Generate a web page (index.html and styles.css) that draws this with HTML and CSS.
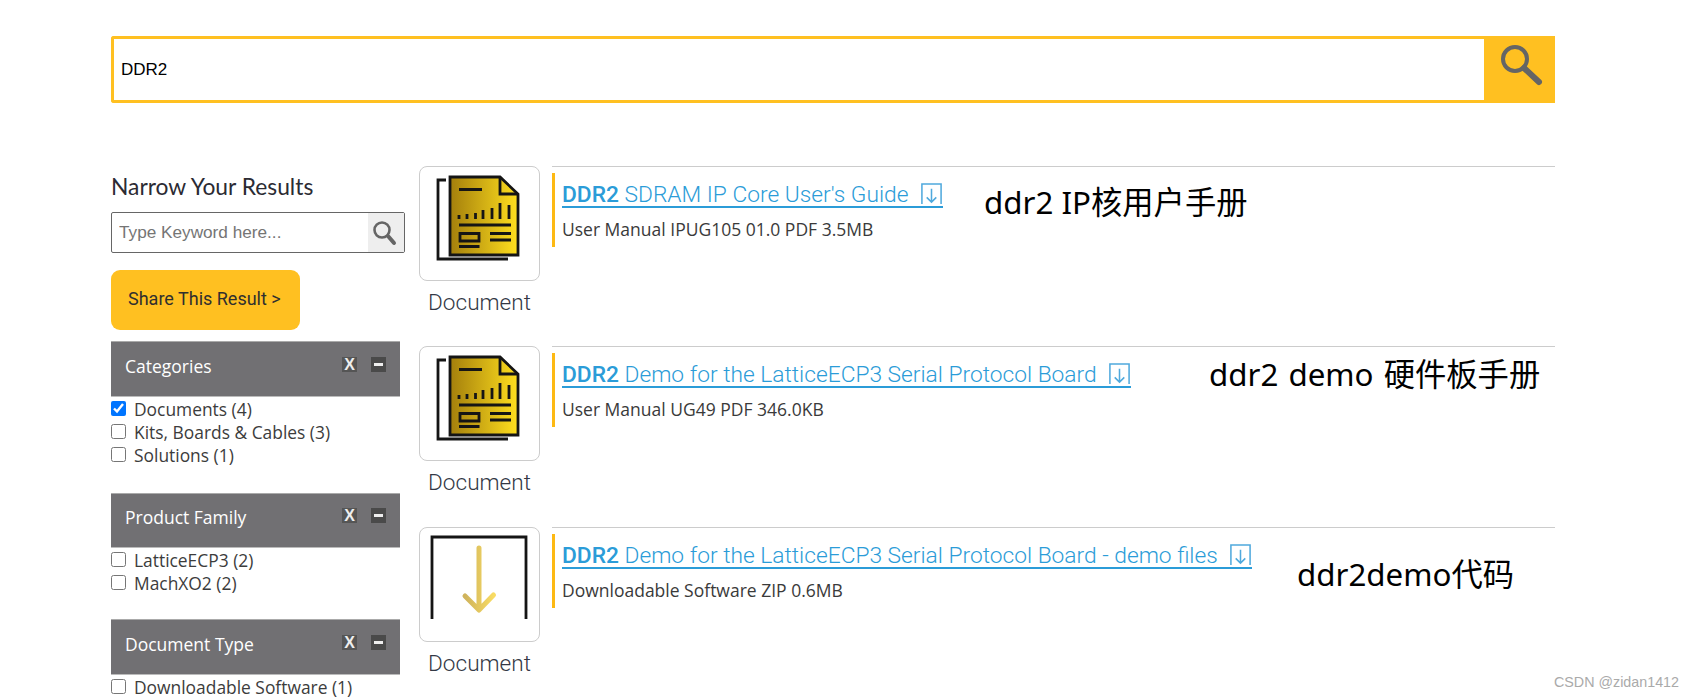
FILE: index.html
```html
<!DOCTYPE html>
<html lang="en">
<head>
<meta charset="utf-8">
<title>DDR2 search results</title>
<link rel="stylesheet" href="styles.css">
</head>
<body>
<svg class="defs" width="0" height="0" aria-hidden="true">
  <defs>
    <linearGradient id="gold" x1="0" x2="1" y1="0" y2="0">
      <stop offset="0" stop-color="#a47f0c"/>
      <stop offset="1" stop-color="#ffdf1e"/>
    </linearGradient>
    <linearGradient id="soft" gradientUnits="userSpaceOnUse" x1="46" x2="75" y1="0" y2="0">
      <stop offset="0" stop-color="#cfb35c"/>
      <stop offset="1" stop-color="#f9dc63"/>
    </linearGradient>
    <g id="doc-icon">
      <path class="ink" d="M27 14 H19 V93 H89"/>
      <path class="page-shape" d="M31 11 H81 L99 28 V89 H31 Z"/>
      <path class="ink" d="M81 11 V28 H99"/>
      <path class="ink" d="M40 23.5 H63 M40 59 H92 M40 80.5 H60.5 M71 67.5 H92 M71 74 H92 M41 67.5 H60 V75 H41 Z"/>
      <path class="ink" d="M40 49 V53 M48 48 V53 M56.5 47 V53 M64 44 V53 M73 42 V53 M81 37 V53 M90 39 V53"/>
    </g>
  </defs>
</svg>
<div class="page">
  <form class="search">
    <input class="search-input" type="text" value="DDR2">
    <span class="search-btn">
      <svg width="65" height="67" viewBox="0 0 65 67"><circle cx="28" cy="23" r="12" class="glass"/><path d="M37 32 L52 46" class="glass handle"/></svg>
    </span>
  </form>

  <div class="main">
    <aside class="side">
      <h2 class="side-title">Narrow Your Results</h2>
      <div class="keyword">
        <input class="keyword-input" type="text" placeholder="Type Keyword here...">
        <span class="keyword-btn">
          <svg width="36" height="39" viewBox="0 0 36 39"><circle cx="14" cy="17" r="7.5" class="glass thin"/><path d="M20 23 L26 30" class="handle-s"/></svg>
        </span>
      </div>
      <a class="share">Share This Result &gt;</a>

      <section class="facet">
        <header class="facet-head"><span>Categories</span><span class="facet-tools"><b>X</b><b class="minus"></b></span></header>
        <label class="check"><input type="checkbox" checked>Documents (4)</label>
        <label class="check"><input type="checkbox">Kits, Boards &amp; Cables (3)</label>
        <label class="check"><input type="checkbox">Solutions (1)</label>
      </section>

      <section class="facet facet-short">
        <header class="facet-head"><span>Product Family</span><span class="facet-tools"><b>X</b><b class="minus"></b></span></header>
        <label class="check"><input type="checkbox">LatticeECP3 (2)</label>
        <label class="check"><input type="checkbox">MachXO2 (2)</label>
      </section>

      <section class="facet">
        <header class="facet-head"><span>Document Type</span><span class="facet-tools"><b>X</b><b class="minus"></b></span></header>
        <label class="check"><input type="checkbox">Downloadable Software (1)</label>
      </section>
    </aside>

    <div class="results">
      <article class="row">
        <div class="thumb">
          <div class="tile">
            <svg width="119" height="113" viewBox="1 1 119 113"><use href="#doc-icon"/></svg>
          </div>
          <p class="kind">Document</p>
        </div>
        <div class="body">
          <div class="info">
            <a class="link"><b>DDR2</b> SDRAM IP Core User's Guide <svg class="dl" width="23" height="23" viewBox="0 0 24 24"><path d="M2 23 V2 H22 V23 M12 7 V21 M7 16 L12 21 L17 16"/></svg></a>
            <p class="meta">User Manual IPUG105 01.0 PDF 3.5MB</p>
          </div>
          <p class="note note-one">ddr2 IP核用户手册</p>
        </div>
      </article>

      <article class="row">
        <div class="thumb">
          <div class="tile">
            <svg width="119" height="113" viewBox="1 1 119 113"><use href="#doc-icon"/></svg>
          </div>
          <p class="kind">Document</p>
        </div>
        <div class="body">
          <div class="info">
            <a class="link"><b>DDR2</b> Demo for the LatticeECP3 Serial Protocol Board <svg class="dl" width="23" height="23" viewBox="0 0 24 24"><path d="M2 23 V2 H22 V23 M12 7 V21 M7 16 L12 21 L17 16"/></svg></a>
            <p class="meta">User Manual UG49 PDF 346.0KB</p>
          </div>
          <p class="note note-two">ddr2 demo 硬件板手册</p>
        </div>
      </article>

      <article class="row">
        <div class="thumb">
          <div class="tile">
            <svg width="119" height="113" viewBox="1 1 119 113">
              <path class="ink" d="M13 92 V10 H107 V92"/>
              <path class="arrow" d="M60 21 V82 M46 69 L60 83 L74.5 68"/>
            </svg>
          </div>
          <p class="kind">Document</p>
        </div>
        <div class="body">
          <div class="info">
            <a class="link"><b>DDR2</b> Demo for the LatticeECP3 Serial Protocol Board - demo files <svg class="dl" width="23" height="23" viewBox="0 0 24 24"><path d="M2 23 V2 H22 V23 M12 7 V21 M7 16 L12 21 L17 16"/></svg></a>
            <p class="meta">Downloadable Software ZIP 0.6MB</p>
          </div>
          <p class="note note-three">ddr2demo代码</p>
        </div>
      </article>
    </div>
  </div>
</div>
<div class="mark">CSDN @zidan1412</div>
</body>
</html>
```
FILE: styles.css
```css
* { box-sizing: border-box; }
html, body { margin: 0; height: 698px; overflow: hidden; background: #fff; }
body { font-family: "Open Sans", sans-serif; color: #333; position: relative; }
.defs { position: absolute; }
.page { width: 1444px; margin-left: 111px; padding-top: 36px; }

.search { display: flex; height: 67px; border: 3px solid #ffc021; border-right: 0; border-radius: 3px 0 0 3px; }
.search-input { flex: 1; min-width: 0; border: 0; outline: 0; padding: 0 0 0 7px; font: 17px "Liberation Sans", sans-serif; color: #000; background: #fff; }
.search-btn { width: 71px; margin: -3px 0; background: #ffc021; display: flex; align-items: center; justify-content: center; }
.glass { fill: none; stroke: #656565; stroke-width: 4; }
.handle { stroke-width: 6; stroke-linecap: round; }
.thin { stroke-width: 2.6; }
.handle-s { fill: none; stroke: #656565; stroke-width: 4; stroke-linecap: round; }

.main { display: grid; grid-template-columns: 308px 1fr; margin-top: 63px; }

.side-title { margin: 0; height: 46px; padding-top: 4px; font: 400 22.8px/32px Lato, sans-serif; color: #2b2b33; }
.keyword { width: 294px; height: 41px; display: flex; border: 1px solid #666; border-radius: 2px; }
.keyword-input { flex: 1; min-width: 0; border: 0; outline: 0; padding: 0 0 0 7px; font: 17.2px "Liberation Sans", sans-serif; background: transparent; }
.keyword-input::placeholder { color: #757575; opacity: 1; }
.keyword-btn { width: 36px; background: #eee; display: flex; }
.share { display: block; width: 189px; height: 60px; margin-top: 17px; background: #ffc021; border-radius: 9px; padding-left: 17px; font: 400 18px/57px Roboto, sans-serif; color: #2f2f2f; }

.facet { width: 289px; margin-top: 11px; margin-bottom: 26px; }
.facet + .facet { margin-top: 0; }
.facet-head { height: 56px; background: #717073; border-top: 1px solid #aaa; border-bottom: 1px solid #bbb; color: #fff; font-size: 17.5px; padding: 0 14px 6px; display: flex; justify-content: space-between; align-items: center; margin-bottom: 1px; }
.facet-tools { display: flex; gap: 14px; margin-top: -3px; }
.facet-tools b { width: 15px; height: 15px; background: #555; color: #eee; font: 700 16px/15px "Liberation Sans", sans-serif; text-align: center; display: block; }
.facet-tools .minus { position: relative; background: #4a4a4a; }
.facet-tools .minus::after { content: ""; position: absolute; left: 3px; right: 3px; top: 6px; height: 3px; background: #eee; }
.facet-short { margin-bottom: 24px; }
.facet-short .facet-head { height: 55px; padding-bottom: 7px; }
.check { display: flex; align-items: center; height: 23px; font-size: 17.4px; line-height: 23px; color: #3c3c3c; white-space: nowrap; }
.check input { width: 15px; height: 15px; margin: -3px 8px 0 0; accent-color: #0075ff; }

.results { display: block; }
.row { display: grid; grid-template-columns: 121px 1fr; column-gap: 12px; height: 180px; }
.row:nth-child(2) { height: 181px; }
.tile { width: 121px; height: 115px; border: 1px solid #ccc; border-radius: 8px; }
.tile svg { display: block; }
.kind { margin: 6px 0 0; text-align: center; font: 300 22.6px/32px Roboto, sans-serif; color: #333845; }
.ink { fill: none; stroke: #151515; stroke-width: 2.8; }
.page-shape { fill: url(#gold); stroke: #151515; stroke-width: 2.8; }
.arrow { fill: none; stroke: url(#soft); stroke-width: 5; stroke-linecap: round; stroke-linejoin: round; }

.body { border-top: 1px solid #ccc; padding-top: 6px; position: relative; }
.info { height: 74px; border-left: 3px solid #fdb913; padding-left: 7px; padding-top: 9px; }
.link { display: inline-block; height: 26px; color: #2b9cd8; font: 300 22.75px/24px Roboto, sans-serif; border-bottom: 2px solid #2b9cd8; white-space: nowrap; }
.link b { font-weight: 500; }
.dl { vertical-align: -3px; margin-left: 6px; }
.dl path { fill: none; stroke: #4fa9dd; stroke-width: 1.6; }
.meta { margin: 10px 0 0; font-size: 17.5px; line-height: 22px; color: #3a3a3a; white-space: nowrap; }

.note { position: absolute; margin: 0; font: 400 31.3px/40px "Noto Sans", "Noto Sans CJK SC", sans-serif; color: #000; white-space: nowrap; }
.note-one { left: 432px; top: 15px; }
.note-two { left: 657px; top: 7px; word-spacing: 2px; }
.note-three { left: 745px; top: 26px; }

.mark { position: absolute; left: 1554px; top: 674px; font: 14.3px "Liberation Sans", sans-serif; color: #aaa; }
```
